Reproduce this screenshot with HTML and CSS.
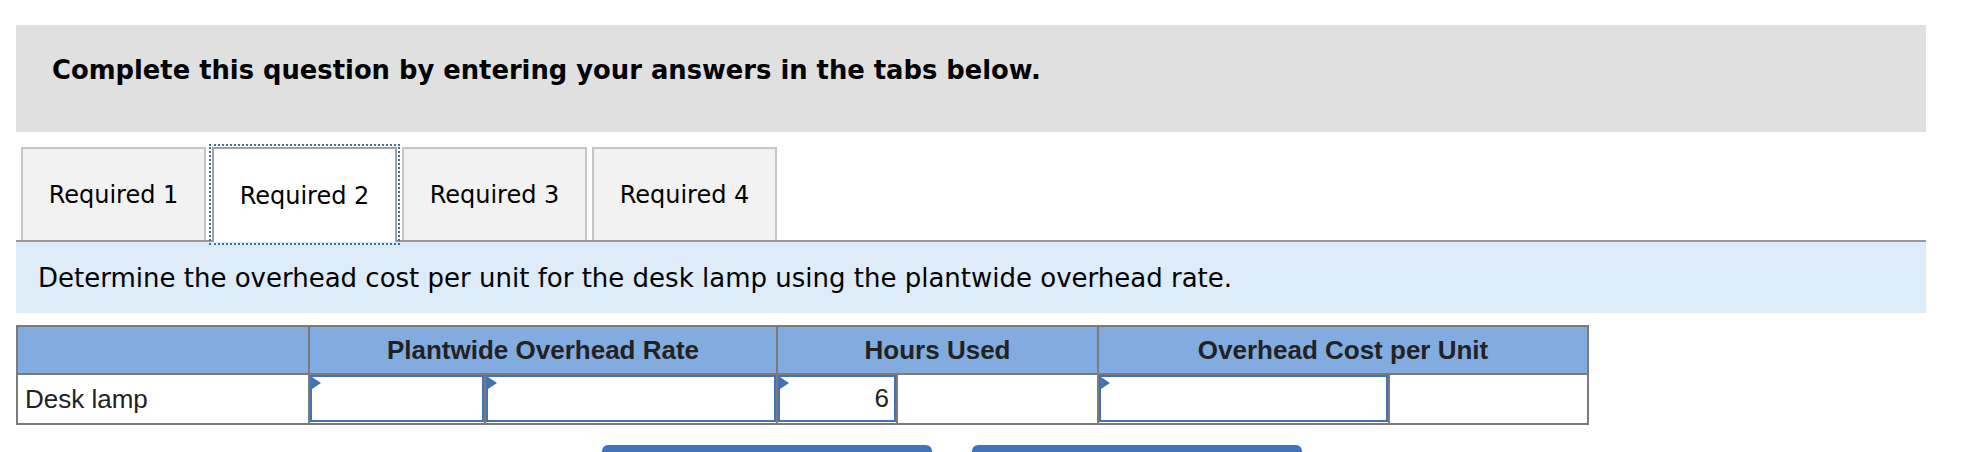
FILE: index.html
```html
<!DOCTYPE html>
<html lang="en">
<head>
    <meta charset="UTF-8">
    <meta name="viewport" content="width=device-width, initial-scale=1.0">
    <title>Required 2</title>
    <link rel="stylesheet" href="styles.css">
</head>
<body>
    <div class="page">
        <div class="prompt">Complete this question by entering your answers in the tabs below.</div>

        <div class="tabs">
            <div class="tab">Required 1</div>
            <div class="tab active">Required 2</div>
            <div class="tab">Required 3</div>
            <div class="tab">Required 4</div>
        </div>

        <div class="instruction">Determine the overhead cost per unit for the desk lamp using the plantwide overhead rate.</div>

        <table class="answers">
            <colgroup>
                <col class="c-label">
                <col class="c-rate1">
                <col class="c-rate2">
                <col class="c-hours1">
                <col class="c-hours2">
                <col class="c-cost1">
                <col class="c-cost2">
            </colgroup>
            <thead>
                <tr>
                    <th></th>
                    <th colspan="2">Plantwide Overhead Rate</th>
                    <th colspan="2">Hours Used</th>
                    <th colspan="2">Overhead Cost per Unit</th>
                </tr>
            </thead>
            <tbody>
                <tr>
                    <td class="label">Desk lamp</td>
                    <td><div class="entry"></div></td>
                    <td><div class="entry"></div></td>
                    <td><div class="entry given">6</div></td>
                    <td></td>
                    <td><div class="entry"></div></td>
                    <td></td>
                </tr>
            </tbody>
        </table>

        <div class="actions">
            <div class="btn"></div>
            <div class="btn"></div>
        </div>
    </div>
</body>
</html>
```

FILE: styles.css
```css
:root {
    --blue: #4472b4;
    --grid: #7b7b7b;
}

* {
    box-sizing: border-box;
}

body {
    margin: 0;
    background: #fff;
    color: #000;
    font-family: 'DejaVu Sans', Verdana, sans-serif;
}

.page {
    width: 1910px;
    margin-left: 16px;
    padding-top: 25px;
}

.prompt {
    height: 107px;
    padding: 29px 0 0 36px;
    background: #e0e0e0;
    font-size: 25.8px;
    font-weight: bold;
    line-height: 32px;
}

.tabs {
    display: flex;
    align-items: flex-start;
    margin-top: 15px;
    border-bottom: 2px solid #999;
}

.tab {
    width: 185px;
    height: 93px;
    margin-left: 5px;
    display: flex;
    align-items: center;
    justify-content: center;
    background: #f2f2f2;
    border: 2px solid #c6c6c6;
    border-bottom: none;
    font-size: 24px;
}

.tab.active {
    height: 95px;
    margin-bottom: -2px;
    margin-left: 6px;
    background: #fff;
    border-color: #a0a0a0;
    outline: 2px dotted #3d6db3;
    outline-offset: 1px;
}

.instruction {
    height: 71px;
    padding-left: 22px;
    display: flex;
    align-items: center;
    background: #deebf8;
    font-size: 26px;
}

.answers {
    margin-top: 12px;
    width: 1573px;
    table-layout: fixed;
    border-collapse: collapse;
    font-family: 'Liberation Sans', Arial, sans-serif;
    font-size: 26px;
    color: #222;
}

.c-label { width: 292px; }
.c-rate1 { width: 176px; }
.c-rate2 { width: 292px; }
.c-hours1 { width: 120px; }
.c-hours2 { width: 201px; }
.c-cost1 { width: 291px; }
.c-cost2 { width: 199px; }

.answers th,
.answers td {
    border: 2px solid var(--grid);
    padding: 0;
}

.answers th {
    height: 48px;
    background: #82abdf;
    font-weight: bold;
    text-align: center;
}

.answers td {
    height: 50px;
    vertical-align: top;
}

.answers td.label {
    padding-left: 7px;
    vertical-align: middle;
}

.entry {
    position: relative;
    height: 47px;
    border: 2px solid var(--blue);
    padding-right: 5px;
    text-align: right;
    line-height: 43px;
}

.entry::before {
    content: '';
    position: absolute;
    top: 0;
    left: 0;
    border-left: 9px solid var(--blue);
    border-top: 6px solid transparent;
    border-bottom: 6px solid transparent;
}

.actions {
    display: flex;
    gap: 40px;
    margin-top: 20px;
    padding-left: 586px;
}

.btn {
    width: 330px;
    height: 48px;
    background: var(--blue);
    border-radius: 6px;
}
```
